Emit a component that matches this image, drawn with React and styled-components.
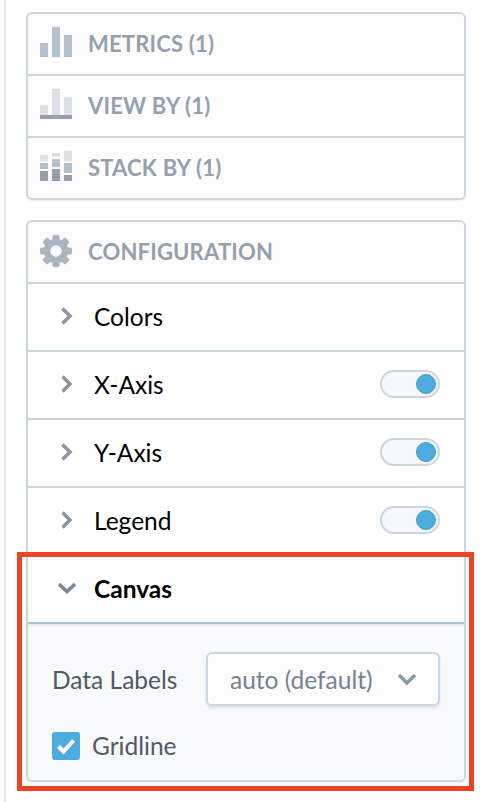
import styled, { createGlobalStyle } from "styled-components";

const GlobalStyle = createGlobalStyle`
  html, body {
    margin: 0;
    background: #fff;
    font-family: Lato, "Open Sans", sans-serif;
  }
`;

const Sidebar = styled.div`
  position: relative;
  box-sizing: border-box;
  width: 480px;
  height: 802px;
  overflow: hidden;
  padding: 12px 14px 0 26px;
  display: flex;
  flex-direction: column;
  gap: 20px;
  &::before {
    content: "";
    position: absolute;
    left: 4px;
    top: 0;
    bottom: 0;
    width: 2px;
    background: #e6ebf2;
  }
`;

const Panel = styled.div`
  border: 2px solid #ccd6e0;
  border-radius: 6px;
  background: #fcfcfd;
  box-shadow: 0 1px 2px rgba(20, 56, 93, 0.08);
  overflow: hidden;
`;

const BucketRow = styled.div`
  box-sizing: border-box;
  height: ${(p) => p.$height}px;
  display: flex;
  align-items: center;
  padding: 0 0 2px 12px;
  gap: 16px;
  & + & {
    border-top: 2px solid #ccd6e0;
  }
`;

const BucketTitle = styled.span`
  font-size: 22px;
  font-weight: 700;
  letter-spacing: 0.2px;
  color: #94a1ad;
`;

const ConfigRow = styled.div`
  box-sizing: border-box;
  height: 68px;
  display: flex;
  align-items: center;
  padding: 0 24px 2px 30px;
  background: #fff;
  border-top: 2px solid #ccd6e0;
`;

const CanvasRow = styled(ConfigRow)`
  height: 70px;
  border-bottom: 2px solid #b1c0cf;
  box-shadow: 0 1px 3px rgba(20, 56, 93, 0.12);
  position: relative;
`;

const Chevron = styled.svg`
  width: 18px;
  height: 18px;
  flex: none;
  margin-right: 18px;
  fill: none;
  stroke: ${(p) => p.$color};
  stroke-width: 3.6;
`;

const RowLabel = styled.span`
  flex: 1;
  font-size: 24.5px;
  font-weight: ${(p) => (p.$bold ? 700 : 400)};
  color: #000;
`;

const Toggle = styled.div`
  box-sizing: border-box;
  width: 60px;
  height: 28px;
  border: 2px solid #ccd6e0;
  border-radius: 14px;
  background: #f5f7f9;
  display: flex;
  align-items: center;
  justify-content: flex-end;
  padding-right: 2px;
`;

const ToggleKnob = styled.div`
  box-sizing: border-box;
  width: 20px;
  height: 20px;
  border-radius: 50%;
  background: #4eabdd;
  border: 1px solid #3f97c8;
`;

const CanvasBody = styled.div`
  box-sizing: border-box;
  height: 156px;
  background: #f8f9fb;
  padding: 28px 24px 0 24px;
  display: flex;
  flex-direction: column;
  gap: 25px;
`;

const FieldRow = styled.div`
  display: flex;
  align-items: center;
  justify-content: space-between;
`;

const FieldLabel = styled.span`
  font-size: 24.5px;
  color: #4f5a66;
`;

const Select = styled.div`
  box-sizing: border-box;
  width: 234px;
  height: 54px;
  border: 2px solid #ccd6e0;
  border-radius: 6px;
  background: #fcfcfd;
  box-shadow: 0 2px 3px rgba(20, 56, 93, 0.12);
  display: flex;
  align-items: center;
  justify-content: space-between;
  padding: 0 21px 0 22px;
  font-size: 24.5px;
  color: #76838f;
`;

const SelectChevron = styled.svg`
  width: 20px;
  height: 14px;
  fill: none;
  stroke: #8d99a5;
  stroke-width: 3.4;
`;

const CheckRow = styled.div`
  display: flex;
  align-items: center;
  gap: 12px;
`;

const CheckBox = styled.div`
  width: 28px;
  height: 28px;
  border-radius: 3px;
  background: #4eabdd;
  display: flex;
  align-items: center;
  justify-content: center;
`;

const Highlight = styled.div`
  position: absolute;
  box-sizing: border-box;
  left: 17px;
  top: 552px;
  width: 457px;
  height: 239px;
  border: 5px solid #ef4123;
  pointer-events: none;
`;

const MetricsIcon = () => (
  <svg width="32" height="32" viewBox="0 0 32 32">
    <rect x="0" y="16" width="8" height="14" fill="#b4c0cc" />
    <rect x="12" y="0" width="8" height="30" fill="#b4c0cc" />
    <rect x="24" y="8" width="8" height="22" fill="#b4c0cc" />
  </svg>
);

const ViewByIcon = () => (
  <svg width="32" height="32" viewBox="0 0 32 32">
    <rect x="0" y="16" width="8" height="11" fill="#dde1e6" />
    <rect x="12" y="0" width="8" height="27" fill="#dde1e6" />
    <rect x="24" y="8" width="8" height="19" fill="#dde1e6" />
    <rect x="0" y="26" width="32" height="4" fill="#94a1ad" />
  </svg>
);

const StackByIcon = () => (
  <svg width="32" height="32" viewBox="0 0 32 32">
    <rect x="0" y="4" width="8" height="6" fill="#dde1e6" />
    <rect x="0" y="12" width="8" height="6" fill="#b4c0cc" />
    <rect x="0" y="20" width="8" height="10" fill="#94a1ad" />
    <rect x="12" y="2" width="8" height="4" fill="#dde1e6" />
    <rect x="12" y="8" width="8" height="8" fill="#b4c0cc" />
    <rect x="12" y="18" width="8" height="12" fill="#94a1ad" />
    <rect x="24" y="0" width="8" height="10" fill="#dde1e6" />
    <rect x="24" y="12" width="8" height="10" fill="#b4c0cc" />
    <rect x="24" y="24" width="8" height="6" fill="#94a1ad" />
  </svg>
);

const GearIcon = () => (
  <svg width="32" height="32" viewBox="0 0 32 32">
    <g fill="#a9b5c1">
      {[0, 45, 90, 135, 180, 225, 270, 315].map((angle) => (
        <rect key={angle} x="12.5" y="0" width="7" height="8" rx="1.5" transform={`rotate(${angle} 16 16)`} />
      ))}
    </g>
    <circle cx="16" cy="16" r="9" fill="none" stroke="#a9b5c1" strokeWidth="6.5" />
  </svg>
);

const ChevronRight = () => (
  <Chevron viewBox="0 0 18 18" $color="#8b97a3">
    <path d="M4.5 1.5 L12 9 L4.5 16.5" />
  </Chevron>
);

const ChevronDown = () => (
  <Chevron viewBox="0 0 18 18" $color="#7c8a97">
    <path d="M1 5 L9 12.5 L17 5" />
  </Chevron>
);

const buckets = [
  { title: "METRICS (1)", icon: <MetricsIcon />, height: 60 },
  { title: "VIEW BY (1)", icon: <ViewByIcon />, height: 62 },
  { title: "STACK BY (1)", icon: <StackByIcon />, height: 62 },
];

const configRows = [
  { label: "Colors" },
  { label: "X-Axis", toggle: true },
  { label: "Y-Axis", toggle: true },
  { label: "Legend", toggle: true },
];

const App = () => {
  return (
    <Sidebar>
      <GlobalStyle />
      <Panel>
        {buckets.map((bucket) => (
          <BucketRow key={bucket.title} $height={bucket.height}>
            {bucket.icon}
            <BucketTitle>{bucket.title}</BucketTitle>
          </BucketRow>
        ))}
      </Panel>
      <Panel>
        <BucketRow $height={60}>
          <GearIcon />
          <BucketTitle>CONFIGURATION</BucketTitle>
        </BucketRow>
        {configRows.map((row) => (
          <ConfigRow key={row.label}>
            <ChevronRight />
            <RowLabel>{row.label}</RowLabel>
            {row.toggle && (
              <Toggle>
                <ToggleKnob />
              </Toggle>
            )}
          </ConfigRow>
        ))}
        <CanvasRow>
          <ChevronDown />
          <RowLabel $bold>Canvas</RowLabel>
        </CanvasRow>
        <CanvasBody>
          <FieldRow>
            <FieldLabel>Data Labels</FieldLabel>
            <Select>
              auto (default)
              <SelectChevron viewBox="0 0 20 14">
                <path d="M2 3 L10 11 L18 3" />
              </SelectChevron>
            </Select>
          </FieldRow>
          <CheckRow>
            <CheckBox>
              <svg width="20" height="18" viewBox="0 0 20 18">
                <path d="M2.5 9.5 L7.5 14.5 L17.5 3.5" fill="none" stroke="#fff" strokeWidth="4" />
              </svg>
            </CheckBox>
            <FieldLabel>Gridline</FieldLabel>
          </CheckRow>
        </CanvasBody>
      </Panel>
      <Highlight />
    </Sidebar>
  );
};

export default App;
